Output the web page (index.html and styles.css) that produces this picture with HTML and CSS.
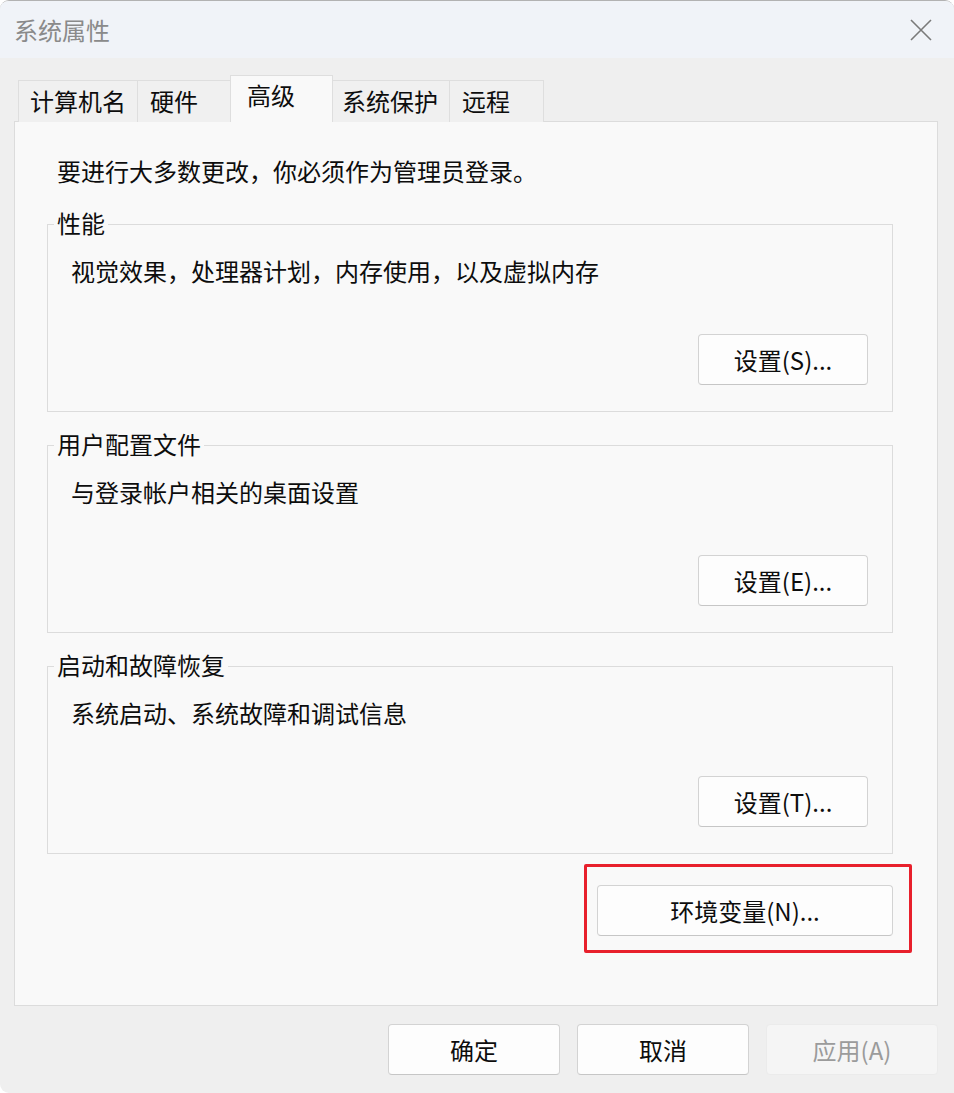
FILE: index.html
```html
<!DOCTYPE html>
<html lang="zh-CN">
<head>
<meta charset="utf-8">
<title>系统属性</title>
<link rel="stylesheet" href="styles.css">
</head>
<body>
<div class="window">
  <div class="titlebar">
    <span class="title">系统属性</span>
    <svg class="close" width="22" height="22" viewBox="0 0 22 22" aria-hidden="true">
      <path d="M1 1 L21 21 M21 1 L1 21" stroke="#7a7a7a" stroke-width="1.6" fill="none"/>
    </svg>
  </div>
  <div class="content">
    <div class="tabs">
      <div class="tab tab-first">计算机名</div>
      <div class="tab">硬件</div>
      <div class="tab tab-active">高级</div>
      <div class="tab tab-wide">系统保护</div>
      <div class="tab tab-last">远程</div>
    </div>
    <div class="panel">
      <p class="intro">要进行大多数更改，你必须作为管理员登录。</p>

      <fieldset class="group">
        <legend class="legend">性能</legend>
        <p class="desc">视觉效果，处理器计划，内存使用，以及虚拟内存</p>
        <div class="group-actions"><button class="btn btn-settings">设置(S)...</button></div>
      </fieldset>

      <fieldset class="group group-next">
        <legend class="legend">用户配置文件</legend>
        <p class="desc">与登录帐户相关的桌面设置</p>
        <div class="group-actions"><button class="btn btn-settings">设置(E)...</button></div>
      </fieldset>

      <fieldset class="group group-next">
        <legend class="legend">启动和故障恢复</legend>
        <p class="desc">系统启动、系统故障和调试信息</p>
        <div class="group-actions"><button class="btn btn-settings">设置(T)...</button></div>
      </fieldset>

      <div class="env-row">
        <div class="highlight">
          <button class="btn btn-env">环境变量(N)...</button>
        </div>
      </div>
    </div>
    <div class="footer">
      <button class="btn btn-footer">确定</button>
      <button class="btn btn-footer">取消</button>
      <button class="btn btn-footer btn-disabled">应用(A)</button>
    </div>
  </div>
</div>
</body>
</html>
```
FILE: styles.css
```css
html, body {
  margin: 0;
  padding: 0;
  background: #ffffff;
}

body {
  font-family: "Noto Sans CJK SC", "Noto Sans", sans-serif;
  font-size: 24px;
  line-height: 32px;
  color: #0d0d0d;
}

.window {
  width: 954px;
  height: 1093px;
  box-sizing: border-box;
  border-top: 1px solid #b2b2b2;
  border-radius: 9px 9px 0 9px;
  overflow: hidden;
  background: #efefef;
  display: flex;
  flex-direction: column;
}

.titlebar {
  height: 57px;
  flex: none;
  background: #f0f3f8;
  display: flex;
  align-items: center;
  justify-content: space-between;
  padding: 0 22px 0 14px;
}

.title {
  color: #8a8a8a;
  font-size: 24px;
  line-height: 32px;
  margin-top: 1px;
}

.close {
  display: block;
  margin-top: 1px;
}

.content {
  flex: 1;
  padding: 17px 16px 0 14px;
  display: flex;
  flex-direction: column;
}

.tabs {
  display: flex;
  align-items: flex-end;
  padding-left: 4px;
  position: relative;
  z-index: 1;
  margin-bottom: -1px;
}

.tab {
  box-sizing: border-box;
  height: 42px;
  min-width: 93px;
  padding: 4px 10px 0 12px;
  border: 1px solid #dedede;
  border-right: none;
  border-bottom: none;
  background: #f0f0f0;
  white-space: nowrap;
  line-height: 32px;
}

.tab-first {
  width: 119px;
  padding-left: 11px;
}

.tab-wide {
  width: 117px;
  padding-left: 9px;
}

.tab-last {
  width: 95px;
  border-right: 1px solid #dedede;
}

.tab-active {
  height: 47px;
  width: 103px;
  padding: 3px 0 0 16px;
  background: #f9f9f9;
  border-right: 1px solid #dedede;
  margin-right: -1px;
  position: relative;
}

.panel {
  background: #f9f9f9;
  border: 1px solid #dcdcdc;
  padding: 33px 0 69px 0;
  display: flex;
  flex-direction: column;
}

.intro {
  margin: 0 0 0 42px;
}

.group {
  margin: 20px 44px 0 32px;
  padding: 0 24px 26px 6px;
  border: 1px solid #dcdcdc;
  min-width: 0;
}

.group-next {
  margin-top: 16px;
}

.legend {
  padding: 0 3px 3px 3px;
  margin: 0;
  line-height: 32px;
}

.desc {
  margin: 13px 0 0 17px;
}

.group-actions {
  display: flex;
  justify-content: flex-end;
  margin-top: 47px;
}

.btn {
  font-family: "Noto Sans CJK SC", "Noto Sans", sans-serif;
  font-size: 24px;
  line-height: 32px;
  color: #0d0d0d;
  background: #fdfdfd;
  border: 1px solid #d3d3d3;
  border-bottom-color: #c6c6c6;
  border-radius: 4px;
  box-sizing: border-box;
  height: 51px;
  padding: 0;
  margin: 0;
  display: flex;
  align-items: center;
  justify-content: center;
}

.btn-settings {
  width: 170px;
}

.env-row {
  display: flex;
  justify-content: flex-end;
  margin: 31px 44px 0 0;
}

.highlight {
  position: relative;
}

.highlight::after {
  content: "";
  position: absolute;
  left: -13px;
  top: -21px;
  right: -19px;
  bottom: -17px;
  border: 3px solid #e8202c;
  border-radius: 2px;
  pointer-events: none;
}

.btn-env {
  width: 296px;
}

.footer {
  display: flex;
  justify-content: flex-end;
  gap: 17px;
  margin-top: 18px;
}

.btn-footer {
  width: 172px;
}

.btn-disabled {
  background: #f5f5f5;
  border-color: #ebebeb;
  color: #9b9b9b;
}
```
